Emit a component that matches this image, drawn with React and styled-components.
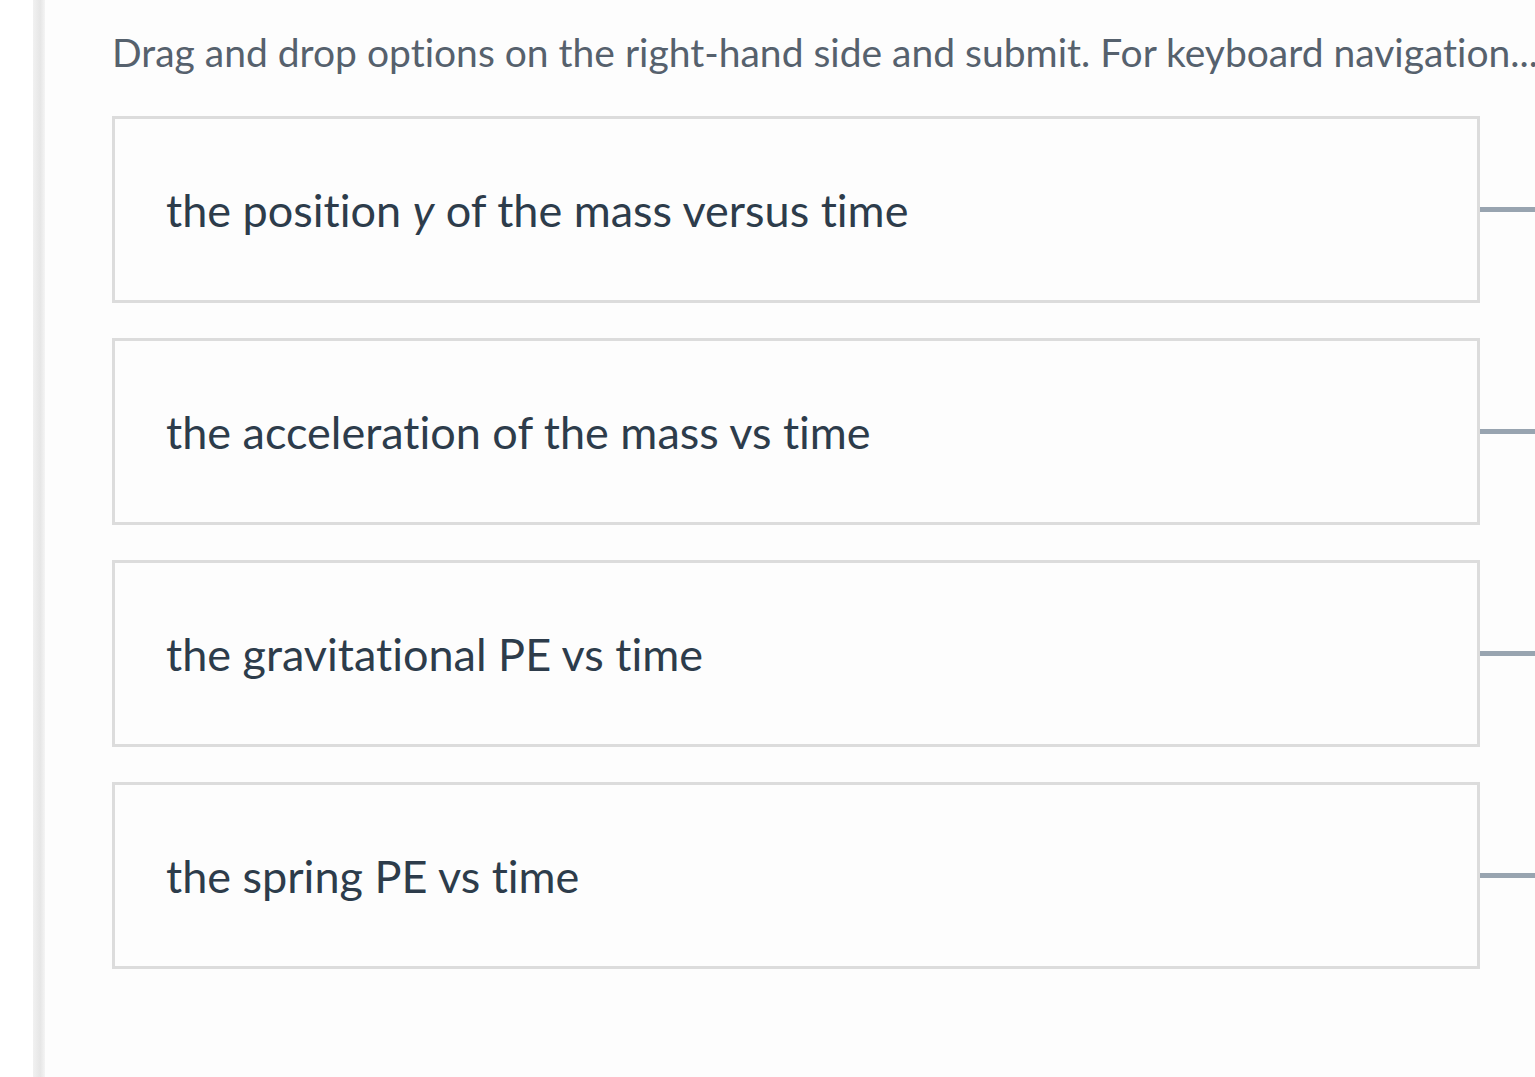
import React from 'react';
import styled, { createGlobalStyle } from 'styled-components';

const GlobalStyle = createGlobalStyle`
  html, body {
    margin: 0;
    padding: 0;
    background: #ffffff;
    overflow: hidden;
  }
  body {
    font-family: Lato, "Open Sans", "Liberation Sans", sans-serif;
    font-variant-ligatures: none;
  }
`;

const Page = styled.div`
  display: flex;
  height: 1077px;
  width: 1535px;
  overflow: hidden;
`;

const Gutter = styled.div`
  width: 33px;
  flex-shrink: 0;
  background: #ffffff;
`;

const Shade = styled.div`
  width: 12px;
  flex-shrink: 0;
  background: linear-gradient(to right, #f1f1f1 0%, #e6e6e6 60%, #f4f4f4 100%);
`;

const Panel = styled.div`
  flex: 1;
  background: #fdfdfd;
  padding: 30px 0 0 67px;
  min-width: 0;
`;

const Hint = styled.p`
  margin: 0 0 42px;
  font-size: 39px;
  line-height: 44px;
  color: #56616d;
  white-space: nowrap;
  overflow: visible;
`;

const List = styled.div`
  display: flex;
  flex-direction: column;
  gap: 35px;
`;

const Row = styled.div`
  display: flex;
  align-items: center;
`;

const Card = styled.div`
  width: 1368px;
  height: 187px;
  flex-shrink: 0;
  box-sizing: border-box;
  border: 3px solid #dcdcdc;
  background: #fdfdfd;
  display: flex;
  align-items: center;
  padding-left: 51px;
  font-size: 45px;
  color: #2d3c4b;
`;

const Label = styled.span`
  white-space: pre;
`;

const Connector = styled.div`
  flex: 1;
  height: 5px;
  background: #98a4b0;
`;

const items = [
  <>the position <i>y</i> of the mass versus time</>,
  'the acceleration of the mass vs time',
  'the gravitational PE vs time',
  'the spring PE vs time',
];

export default function App() {
  return (
    <>
      <GlobalStyle />
      <Page>
        <Gutter />
        <Shade />
        <Panel>
          <Hint>Drag and drop options on the right-hand side and submit. For keyboard navigation...</Hint>
          <List>
            {items.map((label, i) => (
              <Row key={i}>
                <Card>
                  <Label>{label}</Label>
                </Card>
                <Connector />
              </Row>
            ))}
          </List>
        </Panel>
      </Page>
    </>
  );
}
